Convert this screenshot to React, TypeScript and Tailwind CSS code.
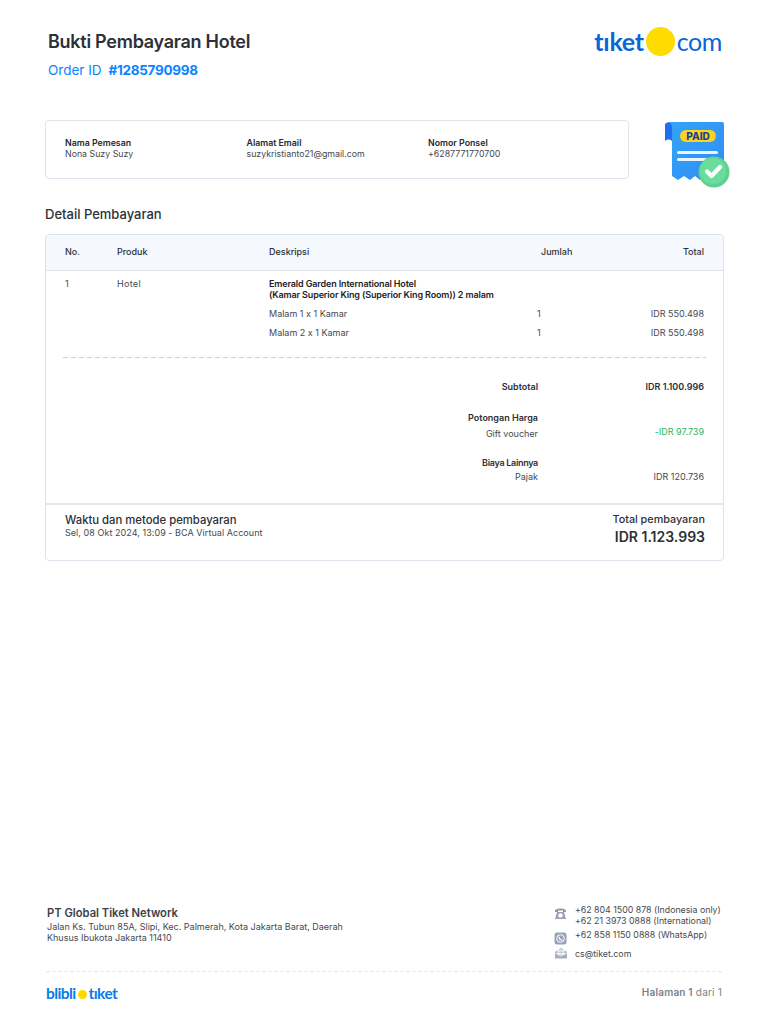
import React from "react";

const font = { fontFamily: '"Inter", "Liberation Sans", sans-serif' };

function PaidBadge() {
  return (
    <svg width="66" height="68" viewBox="0 0 66 68" className="shrink-0">
      <defs>
        <linearGradient id="paper" x1="0" y1="0" x2="1" y2="1">
          <stop offset="0" stopColor="#35a4f5" />
          <stop offset="1" stopColor="#2f8df5" />
        </linearGradient>
      </defs>
      <path d="M1 3 C3 1 6 1 8 2 L8 20 C6 18 3 18 1 20 Z" fill="#1f6ff0" />
      <path
        d="M5 1 L58 1 C60 1 60 3 60 5 L60 52 L54 58 L50 55 L46 59 L41 55 L36 59 L31 55 L26 59 L20 55 L14 59 L8 55 L8 8 C8 4 7 2 5 1 Z"
        fill="url(#paper)"
      />
      <rect x="16" y="9" width="36" height="12" rx="6" fill="#ffd21f" />
      <text x="34" y="18.6" textAnchor="middle" fontSize="10" fontWeight="800" fill="#17429b" fontFamily="Inter, sans-serif">
        PAID
      </text>
      <rect x="13" y="30" width="41" height="3" rx="1.5" fill="#e8f4ff" />
      <rect x="13" y="37" width="32" height="3" rx="1.5" fill="#e8f4ff" />
      <circle cx="50" cy="51" r="15.5" fill="#5fd08f" />
      <circle cx="49" cy="50" r="13" fill="#6bdc9c" />
      <path d="M43 50.5 L47.5 55 L56 46" fill="none" stroke="#fff" strokeWidth="4.2" strokeLinecap="round" strokeLinejoin="round" />
    </svg>
  );
}

function TiketLogo() {
  return (
    <div className="flex items-center h-[29px] text-[#0a66d8] leading-none" style={{ fontFamily: '"Lato", sans-serif' }}>
      <span className="text-[25px] font-bold tracking-[-0.3px]">tıket</span>
      <span className="w-[29px] h-[29px] rounded-full bg-[#ffdc00] mx-[2px]" />
      <span className="text-[25px] tracking-[-0.4px]">com</span>
    </div>
  );
}

function PhoneIcon() {
  return (
    <svg width="13" height="14" viewBox="0 0 13 14" fill="none" className="shrink-0 -mt-[5px]">
      <path d="M1 5 C1 1.5 12 1.5 12 5 L12 6 L9 6 L9 4.4 L4 4.4 L4 6 L1 6 Z" fill="#8d95a8" />
      <path d="M3 6 L10 6 L12 13 L1 13 Z" fill="#9aa2b4" />
      <circle cx="6.5" cy="9.4" r="2.2" fill="#fff" />
    </svg>
  );
}

function WhatsappIcon() {
  return (
    <svg width="13" height="13" viewBox="0 0 13 13" fill="none" className="shrink-0 mt-[3px]">
      <rect x="0.5" y="0.5" width="12" height="12" rx="2.5" fill="#9aa2b4" />
      <circle cx="6.5" cy="6.5" r="3.8" stroke="#fff" strokeWidth="1" />
      <path d="M5 5 C5 7 6 8 8 8" stroke="#fff" strokeWidth="1.1" strokeLinecap="round" />
    </svg>
  );
}

function MailIcon() {
  return (
    <svg width="14" height="12" viewBox="0 0 14 12" fill="none" className="shrink-0">
      <path d="M1 5 L7 1 L13 5 L13 11.5 L1 11.5 Z" fill="#a3abbc" />
      <rect x="3.5" y="2.5" width="7" height="5" fill="#fff" />
      <path d="M4.5 4 H9.5 M4.5 5.6 H9.5" stroke="#9aa2b4" strokeWidth="0.7" />
      <path d="M1 6 L7 9 L13 6" stroke="#fff" strokeWidth="0.8" />
    </svg>
  );
}

const charge = "grid grid-cols-[1fr_166px] pr-[19px] text-[9px]";

export default function App() {
  return (
    <div
      className="bg-white w-[768px] min-h-[1024px] flex flex-col text-[#45494f] [font-feature-settings:'calt'_0]"
      style={font}
    >
      {/* Header */}
      <div className="flex justify-between pl-[48px] pr-[46px] pt-[27px]">
        <div>
          <h1 className="text-[18px] leading-[30px] font-semibold text-[#2d3036] tracking-[-0.27px]">Bukti Pembayaran Hotel</h1>
          <div className="flex gap-[7px] items-center mt-[3px] text-[13.5px] leading-[20px] text-[#0a84ff]">
            <span>Order ID</span>
            <span className="font-bold tracking-[-0.3px]">#1285790998</span>
          </div>
        </div>
        <TiketLogo />
      </div>

      {/* Customer */}
      <div className="flex items-start pl-[45px] pr-[38px] mt-[40px]">
        <div className="w-[586px] h-[59px] border border-[#dfe3ee] rounded-[4px] pl-[19px] pt-[16px] grid grid-cols-[181.5px_181.5px_1fr] text-[8.8px] leading-[11px]">
          <div>
            <p className="font-semibold text-[#26292e]">Nama Pemesan</p>
            <p>Nona Suzy Suzy</p>
          </div>
          <div>
            <p className="font-semibold text-[#26292e]">Alamat Email</p>
            <p>suzykristianto21@gmail.com</p>
          </div>
          <div>
            <p className="font-semibold text-[#26292e]">Nomor Ponsel</p>
            <p>+6287771770700</p>
          </div>
        </div>
        <div className="ml-[35px] mt-[1px]">
          <PaidBadge />
        </div>
      </div>

      <h2 className="pl-[45px] mt-[15px] text-[13px] leading-[20px] font-medium text-[#2d3036]">Detail Pembayaran</h2>

      {/* Table */}
      <div className="ml-[45px] mr-[44px] mt-[10px] h-[327px] border border-[#dfe3ee] rounded-[4px] flex flex-col">
        <div className="h-[36px] shrink-0 bg-[#f5f8fd] border-b border-[#dfe3ee] rounded-t-[4px] pl-[19px] pr-[19px] pb-[2px] grid grid-cols-[52px_152px_272px_1fr_auto] items-center text-[9px] font-medium text-[#2d3036]">
          <span>No.</span>
          <span>Produk</span>
          <span>Deskripsi</span>
          <span>Jumlah</span>
          <span>Total</span>
        </div>
        <div className="pl-[19px] pr-[19px] pt-[7px] grid grid-cols-[52px_152px_1fr] text-[9px]">
          <span className="leading-[12px]">1</span>
          <span className="leading-[12px] tracking-[0.3px]">Hotel</span>
          <div>
            <p className="font-semibold leading-[11px] text-[#1f2226] tracking-[-0.14px]">
              Emerald Garden International Hotel
              <br />
              (Kamar Superior King (Superior King Room)) 2 malam
            </p>
            <div className="grid grid-cols-[268px_1fr_auto] mt-[8px] leading-[12px]">
              <span>Malam 1 x 1 Kamar</span>
              <span>1</span>
              <span>IDR 550.498</span>
            </div>
            <div className="grid grid-cols-[268px_1fr_auto] mt-[7px] leading-[12px]">
              <span>Malam 2 x 1 Kamar</span>
              <span>1</span>
              <span>IDR 550.498</span>
            </div>
          </div>
        </div>

        <div className="mx-[17px] mt-[18px] h-[1px] bg-[repeating-linear-gradient(90deg,#c9cedb_0_5px,transparent_5px_8px)]" />

        <div className={`${charge} mt-[23px] font-semibold text-[#2d3036] leading-[12px]`}>
          <span className="text-right">Subtotal</span>
          <span className="text-right">IDR 1.100.996</span>
        </div>
        <p className={`${charge} mt-[19px] font-semibold text-[#2d3036] leading-[12px]`}>
          <span className="text-right">Potongan Harga</span>
        </p>
        <div className={`${charge} mt-[4px] leading-[12px]`}>
          <span className="text-right">Gift voucher</span>
          <span className="text-right text-[#22b86a] -mt-[2px]">-IDR 97.739</span>
        </div>
        <p className={`${charge} mt-[17px] font-semibold text-[#2d3036] leading-[12px]`}>
          <span className="text-right tracking-[-0.3px]">Biaya Lainnya</span>
        </p>
        <div className={`${charge} mt-[2px] leading-[12px]`}>
          <span className="text-right">Pajak</span>
          <span className="text-right">IDR 120.736</span>
        </div>

        <div className="mt-auto h-[57px] border-t-2 border-[#e3e6f0] flex justify-between pl-[19px] pr-[18px] pt-[8px]">
          <div>
            <p className="text-[11.3px] leading-[14px] font-medium text-[#2d3036]">Waktu dan metode pembayaran</p>
            <p className="text-[9px] leading-[11px] tracking-[0.05px]">Sel, 08 Okt 2024, 13:09 - BCA Virtual Account</p>
          </div>
          <div className="text-right">
            <p className="text-[10.8px] leading-[14px] font-medium text-[#2d3036]">Total pembayaran</p>
            <p className="text-[14px] leading-[18px] mt-[1px] font-semibold text-[#2d3036]">IDR 1.123.993</p>
          </div>
        </div>
      </div>

      {/* Footer */}
      <div className="mt-auto px-[46px] pb-[22px]">
        <div className="flex justify-between">
          <div className="pl-[1px] pt-[2px]">
            <p className="text-[11.2px] leading-[14px] font-semibold text-[#3c4046]">PT Global Tiket Network</p>
            <p className="text-[9px] leading-[11px] mt-[1px] w-[305px]">
              Jalan Ks. Tubun 85A, Slipi, Kec. Palmerah, Kota Jakarta Barat, Daerah Khusus Ibukota Jakarta 11410
            </p>
          </div>
          <div className="w-[168px] text-[8.8px] leading-[11px] flex flex-col">
            <div className="flex gap-[8px] items-center">
              <PhoneIcon />
              <p className="whitespace-nowrap">
                +62 804 1500 878 (Indonesia only)
                <br />
                +62 21 3973 0888 (International)
              </p>
            </div>
            <div className="flex gap-[8px] items-start mt-[3px]">
              <WhatsappIcon />
              <p className="whitespace-nowrap">+62 858 1150 0888 (WhatsApp)</p>
            </div>
            <div className="flex gap-[7px] items-center mt-[2px]">
              <MailIcon />
              <p>cs@tiket.com</p>
            </div>
          </div>
        </div>
        <div className="mt-[12px] h-[1px] bg-[repeating-linear-gradient(90deg,#e3e6ee_0_4px,transparent_4px_6px)]" />
        <div className="flex justify-between items-center mt-[14px] h-[16px]">
          <div className="flex items-center text-[15.5px] font-bold text-[#0a7be8] tracking-[-0.6px]" style={{ fontFamily: '"Lato", sans-serif' }}>
            <span>blibli</span>
            <span className="w-[9px] h-[9px] rounded-full bg-[#ffd800] mx-[2px]" />
            <span>tıket</span>
          </div>
          <p className="text-[10px] text-[#7b818c] tracking-[0.2px] -mt-[4px]">
            <span className="font-semibold">Halaman 1</span> dari 1
          </p>
        </div>
      </div>
    </div>
  );
}
